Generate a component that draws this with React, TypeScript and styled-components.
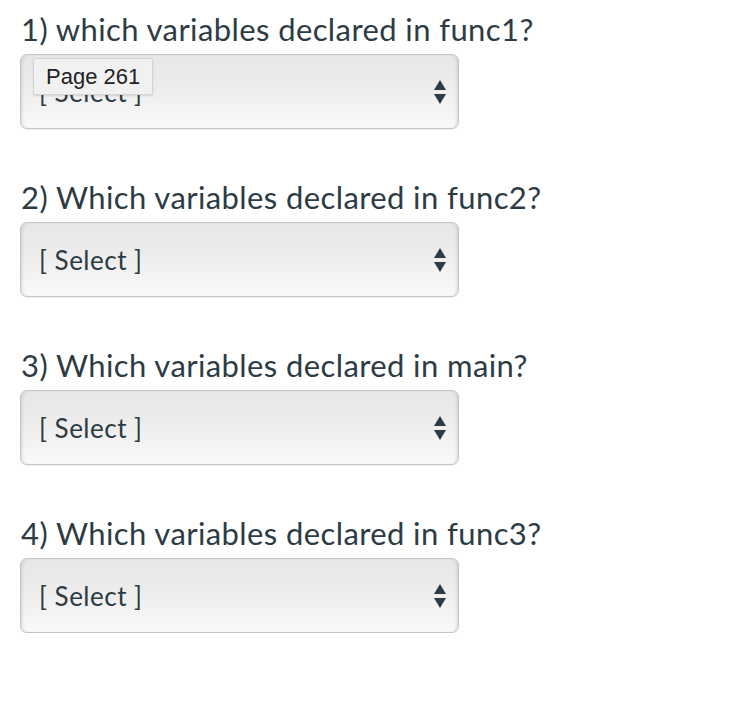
import React from 'react'
import styled, { createGlobalStyle } from 'styled-components'

const GlobalStyle = createGlobalStyle`
  html, body {
    margin: 0;
    padding: 0;
    background: #ffffff;
  }
  body {
    font-family: Lato, "Noto Sans", sans-serif;
    color: #2d3b45;
  }
`

const Page = styled.div`
  display: flex;
  flex-direction: column;
  gap: 50px;
  padding: 11px 20px 0 20px;
`

const Question = styled.div`
  display: flex;
  flex-direction: column;
  gap: 7px;
`

const Heading = styled.div`
  font-size: 31px;
  line-height: 36px;
  height: 36px;
  padding-left: 1px;
  letter-spacing: 0.4px;
  color: #2d3b45;
  white-space: nowrap;
`

const SelectBox = styled.div`
  position: relative;
  box-sizing: border-box;
  width: 439px;
  height: 75px;
  display: flex;
  align-items: center;
  justify-content: space-between;
  padding: 0 12px 0 18px;
  border: 1px solid #c3c6c8;
  border-radius: 7px;
  background: linear-gradient(#e7e7e7 0%, #ececec 40%, #f9f9f9 100%);
  box-shadow: inset 3px 0 4px -3px rgba(0, 0, 0, 0.18), inset -3px 0 4px -3px rgba(0, 0, 0, 0.18),
    0 1px 1px rgba(0, 0, 0, 0.06);
`

const Value = styled.span`
  font-size: 26px;
  line-height: 34px;
  letter-spacing: 0.5px;
  color: #2d3b45;
`

const Tooltip = styled.div`
  position: absolute;
  left: 12px;
  top: 3px;
  box-sizing: border-box;
  height: 37px;
  padding: 0 12px;
  display: flex;
  align-items: center;
  background: #f1f1f1;
  border: 1px solid #d4d4d4;
  border-radius: 2px;
  box-shadow: 0 1px 2px rgba(0, 0, 0, 0.12);
  font-family: "Liberation Sans", Arial, sans-serif;
  font-size: 22px;
  color: #222222;
  white-space: nowrap;
`

const Arrows = () => (
  <svg width="12" height="24" viewBox="0 0 12 24" aria-hidden="true">
    <path d="M6 0 L12 10 L0 10 Z" fill="#2d3b45" />
    <path d="M0 14 L12 14 L6 24 Z" fill="#2d3b45" />
  </svg>
)

const questions = [
  '1) which variables declared in func1?',
  '2) Which variables declared in func2?',
  '3) Which variables declared in main?',
  '4) Which variables declared in func3?',
]

export default function App() {
  return (
    <>
      <GlobalStyle />
      <Page>
        {questions.map((q, i) => (
          <Question key={q}>
            <Heading>{q}</Heading>
            <SelectBox>
              <Value>[ Select ]</Value>
              <Arrows />
              {i === 0 && <Tooltip>Page 261</Tooltip>}
            </SelectBox>
          </Question>
        ))}
      </Page>
    </>
  )
}
